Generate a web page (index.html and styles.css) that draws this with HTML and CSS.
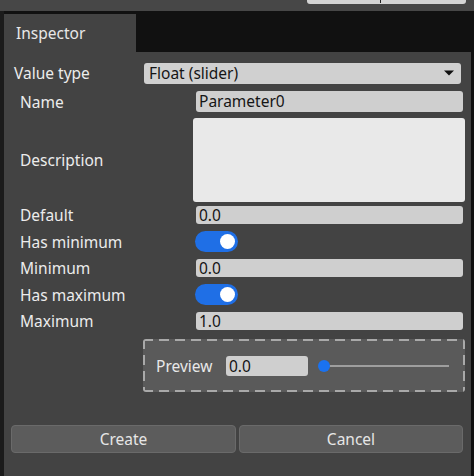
FILE: index.html
```html
<!DOCTYPE html>
<html>
<head>
<meta charset="utf-8">
<link rel="stylesheet" href="styles.css">
</head>
<body>
<div class="app">
  <div class="topbar"><div class="topbtn"><span class="tick"></span></div></div>
  <div class="window">
    <div class="tabbar"><div class="tab">Inspector</div></div>
    <div class="panel">
      <div class="row row-first">
        <div class="label label-wide">Value type</div>
        <div class="dropdown">
          <span>Float (slider)</span>
          <svg class="arrow" width="10" height="6" viewBox="0 0 10 6"><path d="M0 0.5 H10 L5 5.5 Z" fill="#111"/></svg>
        </div>
      </div>
      <div class="row row-name">
        <div class="label">Name</div>
        <div class="input input-name">Parameter0</div>
      </div>
      <div class="row row-desc">
        <div class="label">Description</div>
        <div class="textarea"></div>
      </div>
      <div class="row">
        <div class="label">Default</div>
        <div class="input">0.0</div>
      </div>
      <div class="row">
        <div class="label">Has minimum</div>
        <div class="toggle"><span class="knob"></span></div>
      </div>
      <div class="row">
        <div class="label">Minimum</div>
        <div class="input">0.0</div>
      </div>
      <div class="row">
        <div class="label">Has maximum</div>
        <div class="toggle"><span class="knob"></span></div>
      </div>
      <div class="row">
        <div class="label">Maximum</div>
        <div class="input">1.0</div>
      </div>
      <div class="preview">
        <span class="preview-label">Preview</span>
        <div class="input preview-input">0.0</div>
        <div class="slider"><span class="track"></span><span class="dot"></span></div>
      </div>
      <div class="buttons">
        <div class="btn btn-create">Create</div>
        <div class="btn btn-cancel">Cancel</div>
      </div>
    </div>
  </div>
</div>
</body>
</html>
```
FILE: styles.css
```css
* { box-sizing: border-box; }
html, body { margin: 0; padding: 0; }
body {
  width: 474px;
  height: 476px;
  overflow: hidden;
  background: #111111;
  font-family: "Noto Sans", "Open Sans", sans-serif;
  font-size: 15.5px;
  color: #ececec;
}
.app { width: 474px; height: 476px; display: flex; flex-direction: column; }
.topbar {
  height: 11px;
  background: #474747;
  position: relative;
  flex: none;
}
.topbtn {
  position: absolute;
  left: 307px;
  top: 0;
  width: 159px;
  height: 4px;
  background: #d4d4d4;
  border-radius: 0 0 3px 3px;
}
.tick {
  position: absolute;
  left: 73px;
  top: 0;
  width: 1px;
  height: 3px;
  background: #222;
}
.window {
  flex: 1;
  display: flex;
  flex-direction: column;
  padding-left: 4px;
  padding-right: 3px;
  background: linear-gradient(90deg, #1b1b1b 0 4px, #111 4px);
}
.tabbar {
  height: 41px;
  padding-top: 3px;
  background: #111111;
  flex: none;
}
.tab {
  width: 132px;
  height: 38px;
  background: #434343;
  padding-left: 12px;
  line-height: 38px;
  color: #e8e8e8;
}
.panel {
  flex: 1;
  background: #434343;
  padding-top: 8px;
  display: flex;
  flex-direction: column;
}
.row {
  display: flex;
  align-items: center;
  height: 26.5px;
  padding-left: 16px;
  flex: none;
}
.row-first { height: 26px; padding-left: 10px; }
.row-name { height: 31px; }
.row-desc { height: 85px; }
.label { width: 176px; flex: none; white-space: nowrap; }
.label-wide { width: 130px; }
.dropdown {
  width: 317px;
  height: 21px;
  background: #d0d0d0;
  border-radius: 3px;
  color: #151515;
  display: flex;
  align-items: center;
  justify-content: space-between;
  padding: 0 7px 0 5px;
}
.arrow { display: block; }
.input {
  width: 267px;
  height: 18px;
  background: #cfcfcf;
  border-radius: 3px;
  color: #151515;
  line-height: 18px;
  padding-left: 3px;
}
.input-name { height: 21px; line-height: 21px; }
.textarea {
  width: 272px;
  height: 84px;
  margin-left: -3px;
  background: #e9e9e9;
  border-radius: 3px;
}
.toggle {
  width: 43px;
  height: 21px;
  margin-left: -1px;
  border-radius: 11px;
  background: #1f6fe6;
  position: relative;
}
.knob {
  position: absolute;
  right: 3px;
  top: 3px;
  width: 15px;
  height: 15px;
  border-radius: 50%;
  background: #ffffff;
}
.preview {
  margin-left: 139px;
  margin-top: 4.5px;
  width: 322px;
  height: 53px;
  border-radius: 3px;
  display: flex;
  align-items: center;
  padding-left: 13px;
  background:
    repeating-linear-gradient(90deg, #a9a9a9 0 10px, transparent 10px 16px) left top / 100% 2px no-repeat,
    repeating-linear-gradient(90deg, #a9a9a9 0 10px, transparent 10px 16px) left bottom / 100% 2px no-repeat,
    repeating-linear-gradient(180deg, #a9a9a9 0 10px, transparent 10px 16px) left top / 2px 100% no-repeat,
    repeating-linear-gradient(180deg, #a9a9a9 0 10px, transparent 10px 16px) right top / 2px 100% no-repeat,
    #5a5a5a;
  flex: none;
}
.preview-label { width: 70px; flex: none; color: #e8e8e8; }
.preview-input { width: 82px; height: 20px; line-height: 20px; }
.slider {
  position: relative;
  width: 132px;
  height: 14px;
  margin-left: 9px;
}
.track {
  position: absolute;
  left: 6px;
  right: 0;
  top: 6px;
  height: 2px;
  background: #9e9e9e;
}
.dot {
  position: absolute;
  left: 1px;
  top: 1px;
  width: 12px;
  height: 12px;
  border-radius: 50%;
  background: #1a72f0;
}
.buttons {
  display: flex;
  gap: 3px;
  margin-top: 33px;
  padding-left: 7px;
  flex: none;
}
.btn {
  height: 28px;
  background: #5c5c5c;
  border: 1px solid #6a6a6a;
  border-radius: 4px;
  color: #e6e6e6;
  text-align: center;
  line-height: 26px;
}
.btn-create { width: 225px; }
.btn-cancel { width: 224px; }
```
